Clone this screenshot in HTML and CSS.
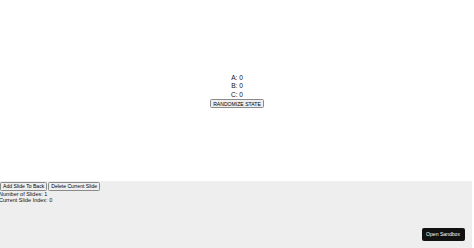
FILE: index.html
```html
<!DOCTYPE html>
<html>
<head>
<meta charset="utf-8">
<link rel="stylesheet" href="styles.css">
</head>
<body>
<main class="stage">
  <div class="slide">
    <div class="line">A: 0</div>
    <div class="line">B: 0</div>
    <div class="line">C: 0</div>
    <button class="btn">RANDOMIZE STATE</button>
  </div>
</main>
<footer class="panel">
  <div class="controls">
    <button class="btn">Add Slide To Back</button>
    <button class="btn">Delete Current Slide</button>
  </div>
  <div class="info">Number of Slides: 1</div>
  <div class="info">Current Slide Index: 0</div>
  <button class="sandbox">Open Sandbox</button>
</footer>
</body>
</html>
```
FILE: styles.css
```css
html, body {
  margin: 0;
  padding: 0;
  width: 474px;
  height: 248px;
  overflow: hidden;
  background: #ffffff;
  font-family: "Liberation Sans", Arial, sans-serif;
  color: #111;
}
.stage {
  height: 181px;
  display: flex;
  align-items: center;
  justify-content: center;
}
.slide {
  display: flex;
  flex-direction: column;
  align-items: center;
  font-size: 6.6px;
  line-height: 8.5px;
  padding-top: 1px;
}
.btn {
  font-family: "Liberation Sans", Arial, sans-serif;
  font-size: 5.1px;
  line-height: 6px;
  padding: 0 2px;
  height: 9px;
  margin: 0;
  background: #efefef;
  border: 1px solid #8a8a8a;
  border-radius: 1.5px;
  color: #000;
}
.panel {
  position: relative;
  height: 67px;
  width: 472px;
  background: #eeeeee;
}
.controls {
  display: flex;
  gap: 1px;
  padding-top: 0.5px;
}
.info {
  font-size: 5.5px;
  line-height: 6.4px;
  margin-left: -1px;
}
.sandbox {
  position: absolute;
  right: 7.5px;
  bottom: 7px;
  height: 13.5px;
  padding: 0 4.5px;
  background: #111;
  color: #fff;
  border: none;
  border-radius: 2px;
  font-family: "Liberation Sans", Arial, sans-serif;
  font-size: 5.1px;
}
```
